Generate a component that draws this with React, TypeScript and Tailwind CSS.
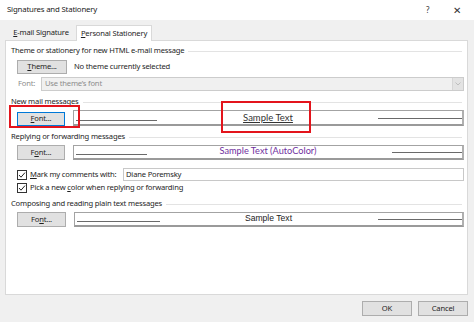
import React from "react";

function Heading({ children, className }: { children: React.ReactNode; className: string }) {
  return (
    <div className={"flex items-center h-[12px] " + className}>
      <span className="text-[#1e1e1e] whitespace-nowrap">{children}</span>
      <div className="flex-1 ml-[4px] mr-[2px] border-t border-[#e3e3e3]" />
    </div>
  );
}

function Btn({ children, focused, className = "" }: { children: React.ReactNode; focused?: boolean; className?: string }) {
  return (
    <div
      className={
        "h-[14px] bg-[#e1e1e1] border flex items-center justify-center text-[#1e1e1e] shrink-0 " +
        (focused ? "border-[#0078d7] " : "border-[#adadad] ") +
        className
      }
    >
      {children}
    </div>
  );
}

function Preview({ children, leftW, rightW }: { children: React.ReactNode; leftW: string; rightW: string }) {
  return (
    <div className="flex-1 h-full ml-[8px] bg-white border border-[#a3a3a3] border-b-2 border-r-2 border-b-[#9a9a9a] border-r-[#b0b0b0] grid grid-cols-[1fr_auto_1fr] items-end pb-[2px]">
      <div className={"justify-self-start ml-[2px] mb-[1px] border-t border-[#6a6a6a] " + leftW} />
      <div className="self-center tracking-normal">{children}</div>
      <div className={"justify-self-end mb-[3px] border-t border-[#6a6a6a] " + rightW} />
    </div>
  );
}

function Check() {
  return (
    <svg width="10" height="10" viewBox="0 0 10 10" className="shrink-0">
      <rect x="0.5" y="0.5" width="9" height="9" fill="white" stroke="#333" strokeWidth="1" />
      <path d="M2 5 L4 7.2 L8 2.6" fill="none" stroke="#222" strokeWidth="1" />
    </svg>
  );
}

export default function App() {
  return (
    <div className="relative w-[474px] h-[322px] bg-[#f0f0f0] overflow-hidden font-['Segoe_UI','Noto_Sans',sans-serif] text-[7.6px] tracking-[-0.18px] text-[#1e1e1e] leading-none">
      {/* title bar */}
      <div className="h-[20px] bg-white flex items-center pl-[7px] pr-[13px]">
        <span className="text-[7.8px] text-[#222]">Signatures and Stationery</span>
        <div className="flex-1" />
        <span className="text-[8px] text-[#333] mr-[24px]">?</span>
        <span className="text-[10px] text-[#333] font-light">✕</span>
      </div>

      {/* tabs */}
      <div className="h-[20px] flex items-end pl-[8px]">
        <div className="h-[15px] w-[66px] flex items-center justify-center">
          <span><u>E</u>-mail Signature</span>
        </div>
        <div className="h-[16px] w-[76px] ml-[2px] bg-white border border-b-0 border-[#d9d9d9] flex items-center justify-center relative top-[1px] z-10">
          <span><u>P</u>ersonal Stationery</span>
        </div>
      </div>

      {/* panel */}
      <div className="ml-[5px] w-[463px] h-[255px] bg-white border border-[#d9d9d9] pl-[5px] pr-[3px] flex flex-col">
        <Heading className="mt-[4px]">Theme or stationery for new HTML e-mail message</Heading>

        <div className="flex items-center h-[14px] mt-[3px] pl-[6px]">
          <Btn className="w-[50px]">
            <span><u>T</u>heme...</span>
          </Btn>
          <span className="ml-[7px]">No theme currently selected</span>
        </div>

        <div className="flex items-center h-[14px] mt-[3px] pl-[7px]">
          <span className="text-[#8c8c8c] w-[23px]">Font:</span>
          <div className="flex-1 h-full bg-[#f0f0f0] border border-[#cccccc] flex items-center">
            <span className="pl-[3px] text-[#8c8c8c]">Use theme’s font</span>
            <div className="flex-1" />
            <div className="w-[11px] h-full bg-[#e3e3e3] border-l border-[#d6d6d6] flex items-center justify-center">
              <svg width="6" height="4" viewBox="0 0 6 4">
                <path d="M0.5 0.5 L3 3 L5.5 0.5" fill="none" stroke="#b5b5b5" strokeWidth="0.8" />
              </svg>
            </div>
          </div>
        </div>

        <Heading className="mt-[5px]">New mail messages</Heading>

        <div className="flex items-end h-[16px] mt-[2px] pl-[6px]">
          <Btn focused className="w-[48px]">
            <span><u>F</u>ont...</span>
          </Btn>
          <Preview leftW="w-[81px]" rightW="w-[84px]">
            <span className="font-['Lato','Open_Sans',sans-serif] text-[9.5px] underline text-[#333] relative top-[1px]">Sample Text</span>
          </Preview>
        </div>

        <Heading className="mt-[5px]">Replying or forwarding messages</Heading>

        <div className="flex items-end h-[15px] mt-[2px] pl-[6px]">
          <Btn className="w-[48px] h-[15px]">
            <span>F<u>o</u>nt...</span>
          </Btn>
          <Preview leftW="w-[71px]" rightW="w-[70px]">
            <span className="font-['Lato','Open_Sans',sans-serif] text-[9.2px] text-[#7030a0]">Sample Text (AutoColor)</span>
          </Preview>
        </div>

        <div className="flex items-center h-[13px] mt-[8px] pl-[6px]">
          <Check />
          <span className="ml-[3px] w-[93px]"><u>M</u>ark my comments with:</span>
          <div className="flex-1 h-full bg-white border border-[#c8c8c8] flex items-center pl-[2px]">
            Diane Poremsky
          </div>
        </div>

        <div className="flex items-center h-[10px] mt-[2px] pl-[6px]">
          <Check />
          <span className="ml-[3px]">Pick a new <u>c</u>olor when replying or forwarding</span>
        </div>

        <Heading className="mt-[5px]">Composing and reading plain text messages</Heading>

        <div className="flex items-end h-[15px] mt-[2px] pl-[6px]">
          <Btn className="w-[49px] h-[15px]">
            <span>Fo<u>n</u>t...</span>
          </Btn>
          <Preview leftW="w-[83px]" rightW="w-[84px]">
            <span className="font-['Liberation_Sans',sans-serif] text-[8.6px] text-[#222]">Sample Text</span>
          </Preview>
        </div>
      </div>

      {/* bottom buttons */}
      <div className="flex justify-end mt-[6px] pr-[6px] gap-[6px]">
        <Btn className="w-[50px] h-[15px]">OK</Btn>
        <Btn className="w-[50px] h-[15px]">Cancel</Btn>
      </div>

      {/* red annotation rectangles */}
      <div className="absolute left-[9px] top-[105px] w-[71px] h-[23px] border-2 border-[#e3141c] z-20" />
      <div className="absolute left-[221px] top-[101px] w-[90px] h-[32px] border-2 border-[#e3141c] z-20" />
    </div>
  );
}
